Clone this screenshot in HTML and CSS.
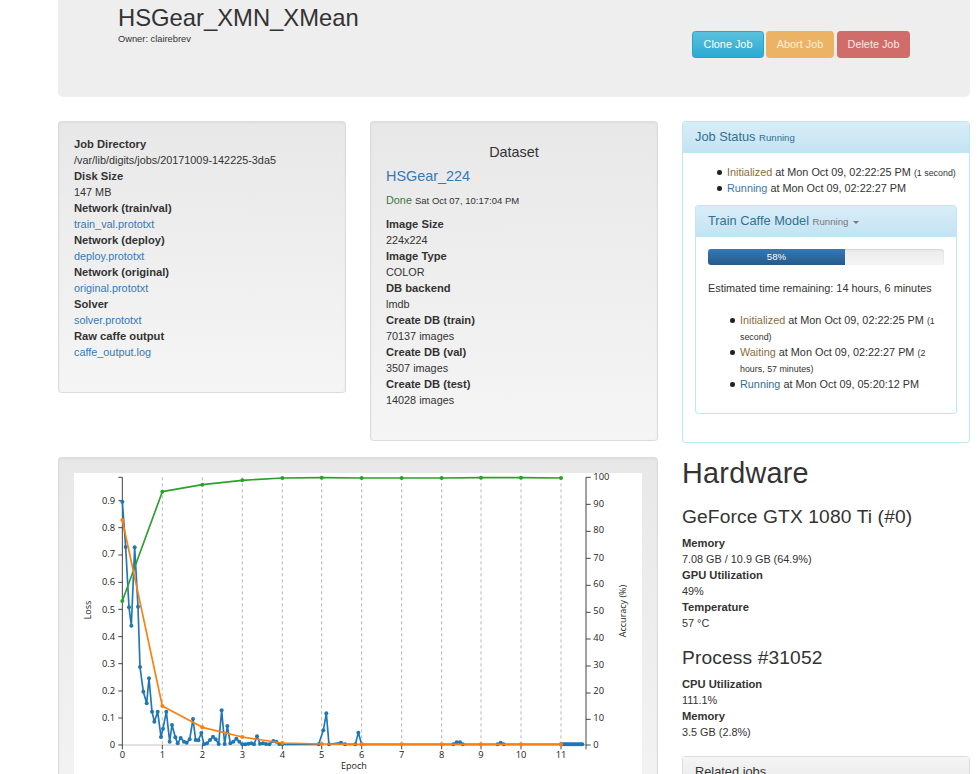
FILE: index.html
```html
<!DOCTYPE html>
<html lang="en">
<head>
<meta charset="utf-8">
<title>HSGear_XMN_XMean</title>
<link rel="stylesheet" href="styles.css">
</head>
<body>
<div class="page">
  <header class="jumbotron">
    <div class="job-title">
      <h1>HSGear_XMN_XMean</h1>
      <p class="owner">Owner: clairebrev</p>
    </div>
    <div class="actions">
      <a class="btn btn-info">Clone Job</a>
      <a class="btn btn-warning">Abort Job</a>
      <a class="btn btn-danger">Delete Job</a>
    </div>
  </header>
  <main class="content">
    <div class="left">
      <div class="cards">
        <section class="well card card-job">
          <dl>
            <dt>Job Directory</dt><dd>/var/lib/digits/jobs/20171009-142225-3da5</dd>
            <dt>Disk Size</dt><dd>147 MB</dd>
            <dt>Network (train/val)</dt><dd><a>train_val.prototxt</a></dd>
            <dt>Network (deploy)</dt><dd><a>deploy.prototxt</a></dd>
            <dt>Network (original)</dt><dd><a>original.prototxt</a></dd>
            <dt>Solver</dt><dd><a>solver.prototxt</a></dd>
            <dt>Raw caffe output</dt><dd><a>caffe_output.log</a></dd>
          </dl>
        </section>
        <section class="well card card-data">
          <h4 class="center">Dataset</h4>
          <h4><a>HSGear_224</a></h4>
          <p class="status"><span class="success">Done</span> <small>Sat Oct 07, 10:17:04 PM</small></p>
          <dl>
            <dt>Image Size</dt><dd>224x224</dd>
            <dt>Image Type</dt><dd>COLOR</dd>
            <dt>DB backend</dt><dd>lmdb</dd>
            <dt>Create DB (train)</dt><dd>70137 images</dd>
            <dt>Create DB (val)</dt><dd>3507 images</dd>
            <dt>Create DB (test)</dt><dd>14028 images</dd>
          </dl>
        </section>
      </div>
      <section class="well chart-well">
        <svg class="chart" viewBox="42 39 1704 960" width="568" height="320" role="img" aria-label="Loss and accuracy by epoch">
          <defs>
            <marker id="dot-b" viewBox="-7 -7 14 14" markerWidth="14" markerHeight="14" markerUnits="userSpaceOnUse"><circle r="6" fill="#1f77b4"/></marker>
            <marker id="dot-g" viewBox="-7 -7 14 14" markerWidth="14" markerHeight="14" markerUnits="userSpaceOnUse"><circle r="6" fill="#2ca02c"/></marker>
            <marker id="dot-o" viewBox="-7 -7 14 14" markerWidth="14" markerHeight="14" markerUnits="userSpaceOnUse"><circle r="6" fill="#ff7f0e"/></marker>
          </defs>
          <g class="grid">
            <path d="M307 52V855M427 52V855M547 52V855M667 52V855M785 52V855M905 52V855M1025 52V855M1145 52V855M1263 52V855M1383 52V855M1503 52V855"/>
          </g>
          <path class="x-axis" d="M187 855H1578"/>
          <path class="axis" d="M175 52H187V868M175 122H187M175 203H187M175 285H187M175 367H187M175 448H187M175 530H187M175 611H187M175 693H187M175 774H187M175 855H187"/>
          <path class="axis" d="M1592 52H1578V868M1578 133H1592M1578 214H1592M1578 295H1592M1578 376H1592M1578 457H1592M1578 537H1592M1578 618H1592M1578 699H1592M1578 778H1592M1578 855H1592"/>
          <path class="axis" d="M307 855V868M427 855V868M547 855V868M667 855V868M785 855V868M905 855V868M1025 855V868M1145 855V868M1263 855V868M1383 855V868M1503 855V868"/>
          <polyline class="series blue" marker-start="url(#dot-b)" marker-mid="url(#dot-b)" marker-end="url(#dot-b)" points="187,125 197,261 207,442 214,497 224,262 234,440 240,621 250,695 260,730 267,655 276,755 283,785 293,755 303,831 309,806 319,755 329,845 336,795 346,832 353,850 362,834 372,845 380,848 389,838 399,777 407,840 415,841 424,819 432,853 441,850 450,840 459,830 467,838 476,852 485,751 494,852 502,798 511,850 520,845 529,836 538,845 547,853 556,853 565,851 574,850 582,853 591,829 600,851 609,850 618,852 628,853 640,843 649,845 658,852 667,853 776,853 790,811 799,760 807,853 843,848 855,853 886,853 895,818 905,853 1180,853 1190,847 1200,847 1208,853 1313,853 1322,848 1331,853 1503,853 1508,853 1513,853 1518,853 1523,853 1528,853 1533,853 1538,853 1543,853 1548,853 1553,853 1558,853 1563,853 1567,853"/>
          <polyline class="series green" marker-start="url(#dot-g)" marker-mid="url(#dot-g)" marker-end="url(#dot-g)" points="187,423 307,95 427,74 547,61 667,54 785,53 905,54 1025,54 1145,54 1263,53 1383,53 1503,54"/>
          <polyline class="series orange" marker-start="url(#dot-o)" marker-mid="url(#dot-o)" marker-end="url(#dot-o)" points="187,180 307,738 427,802 547,831 667,849 785,852 905,853 1025,853 1145,853 1263,853 1383,853 1503,853"/>
          <g class="tick end">
            <text x="165" y="132">0.9</text><text x="165" y="212">0.8</text><text x="165" y="292">0.7</text><text x="165" y="376">0.6</text><text x="165" y="458">0.5</text><text x="165" y="539">0.4</text><text x="165" y="621">0.3</text><text x="165" y="703">0.2</text><text x="165" y="784">0.1</text><text x="165" y="865">0</text>
          </g>
          <g class="tick">
            <text x="1600" y="60">100</text><text x="1600" y="141">90</text><text x="1600" y="219">80</text><text x="1600" y="303">70</text><text x="1600" y="381">60</text><text x="1600" y="462">50</text><text x="1600" y="543">40</text><text x="1600" y="624">30</text><text x="1600" y="702">20</text><text x="1600" y="783">10</text><text x="1600" y="864">0</text>
          </g>
          <g class="tick middle">
            <text x="187" y="894">0</text><text x="307" y="894">1</text><text x="427" y="894">2</text><text x="547" y="894">3</text><text x="667" y="894">4</text><text x="785" y="894">5</text><text x="905" y="894">6</text><text x="1025" y="894">7</text><text x="1145" y="894">8</text><text x="1263" y="894">9</text><text x="1383" y="894">10</text><text x="1503" y="894">11</text>
          </g>
          <text class="label" x="882" y="927">Epoch</text>
          <text class="label" transform="translate(93 450) rotate(-90)">Loss</text>
          <text class="label" transform="translate(1698 453) rotate(-90)">Accuracy (%)</text>
        </svg>
      </section>
    </div>
    <aside class="right">
      <section class="panel panel-info">
        <div class="panel-heading"><h3>Job Status <small>Running</small></h3></div>
        <div class="panel-body">
          <ul>
            <li><span class="warning">Initialized</span> at Mon Oct 09, 02:22:25 PM <small>(1 second)</small></li>
            <li><span class="primary">Running</span> at Mon Oct 09, 02:22:27 PM</li>
          </ul>
          <section class="panel panel-info inner">
            <div class="panel-heading"><h3>Train Caffe Model <small class="muted">Running <span class="caret"></span></small></h3></div>
            <div class="panel-body">
              <div class="progress"><div class="bar">58%</div></div>
              <p class="eta">Estimated time remaining: 14 hours, 6 minutes</p>
              <ul>
                <li><span class="warning">Initialized</span> at Mon Oct 09, 02:22:25 PM <small>(1 second)</small></li>
                <li><span class="warning">Waiting</span> at Mon Oct 09, 02:22:27 PM <small>(2 hours, 57 minutes)</small></li>
                <li><span class="info">Running</span> at Mon Oct 09, 05:20:12 PM</li>
              </ul>
            </div>
          </section>
        </div>
      </section>
      <h1 class="hw-title">Hardware</h1>
      <h3 class="hw-sub">GeForce GTX 1080 Ti (#0)</h3>
      <dl>
        <dt>Memory</dt><dd>7.08 GB / 10.9 GB (64.9%)</dd>
        <dt>GPU Utilization</dt><dd>49%</dd>
        <dt>Temperature</dt><dd>57 °C</dd>
      </dl>
      <h3 class="hw-sub">Process #31052</h3>
      <dl>
        <dt>CPU Utilization</dt><dd>111.1%</dd>
        <dt>Memory</dt><dd>3.5 GB (2.8%)</dd>
      </dl>
      <section class="panel panel-default">
        <div class="panel-heading"><h3>Related jobs</h3></div>
      </section>
    </aside>
  </main>
</div>
</body>
</html>
```

FILE: styles.css
```css
* { box-sizing: border-box; }
html, body { margin: 0; height: 774px; overflow: hidden; background: #fff; }
body {
  font-family: "Liberation Sans", Arial, sans-serif;
  font-size: 10.85px;
  line-height: 16px;
  color: #333;
}
a { color: #337ab7; text-decoration: none; }
small { font-size: 9.52px; line-height: 0; }
h1, h3, h4, p, dl, dd, ul { margin: 0; font-weight: 500; }
p, dd, li { font-weight: 400; }
dt { font-weight: 700; font-size: 11.2px; }

.page { width: 912px; height: 774px; margin-left: 58px; overflow: hidden; }

.jumbotron {
  display: flex;
  justify-content: space-between;
  align-items: flex-start;
  height: 97px;
  margin-bottom: 24px;
  padding: 2px 60px 0;
  background: #eee;
  border-radius: 0 0 4.8px 4.8px;
}
.job-title h1 { font-size: 23.8px; line-height: 31px; font-weight: 400; }
.owner { font-size: 9.3px; line-height: 13px; }
.actions { display: flex; gap: 2px; margin-top: 29px; }
.btn {
  display: block;
  padding: 4.2px 0 4.8px;
  border: 1px solid transparent;
  border-radius: 3.2px;
  color: #fff;
  line-height: 16px;
  text-align: center;
}
.btn-info { width: 72px; background: linear-gradient(#5bc0de, #2aabd2); border-color: #28a4c9; }
.btn-warning { width: 68px; background: #ecb365; border-color: #ecb365; color: #fbeedd; }
.btn-danger { width: 73px; background: #d06d6a; border-color: #d06d6a; color: #f9e9e8; margin-left: 1px; }

.content { display: grid; grid-template-columns: 600px 288px; column-gap: 24px; }
.cards { display: flex; gap: 24px; align-items: flex-start; }

.well {
  background: linear-gradient(#e8e8e8, #f5f5f5);
  border: 1px solid #dcdcdc;
  border-radius: 3.2px;
  padding: 15px;
  box-shadow: inset 0 1px 3px rgba(0, 0, 0, .05), 0 1px 0 rgba(255, 255, 255, .1);
}
.card { width: 288px; }
.card dl { margin-bottom: 17px; }
.card-job { padding-top: 14px; }
.card h4 { font-size: 14.4px; line-height: 15.84px; font-weight: 400; margin: 8px 0; }
.card-data h4 + h4 { margin-bottom: 7px; }
.center { text-align: center; }
.status { margin-bottom: 8px; }
.success { color: #3c763d; }

.chart-well { margin-top: 16.5px; height: 400px; }
.chart { display: block; background: #fff; }
.grid path { fill: none; stroke: #b5b5b5; stroke-width: 3; stroke-dasharray: 9 9; }
.axis { fill: none; stroke: #444; stroke-width: 3; }
.x-axis { fill: none; stroke: #c4c4c4; stroke-width: 3; }
.series { fill: none; stroke-width: 5; stroke-linejoin: round; }
.blue { stroke: #1f77b4; }
.green { stroke: #2ca02c; }
.orange { stroke: #ff7f0e; }
.tick text { font-family: "Open Sans", sans-serif; font-size: 28px; fill: #222; }
.end text { text-anchor: end; }
.middle text { text-anchor: middle; }
.label { font-family: "Open Sans", sans-serif; font-size: 27px; fill: #222; text-anchor: middle; }

.panel { border: 1px solid #ddd; border-radius: 3.2px; background: #fff; }
.panel-info { border-color: #bce8f1; }
.panel-default { border-color: #ddd; }
.panel-heading { padding: 8px 12px; border-bottom: 1px solid #bce8f1; }
.panel-info > .panel-heading {
  color: #31708f;
  background: linear-gradient(#d9edf7, #c4e3f3);
}
.panel-default > .panel-heading { background: linear-gradient(#f5f5f5, #e8e8e8); border-color: #ddd; }
.panel-heading h3 { font-size: 12.8px; line-height: 14.08px; font-weight: 400; }
.panel-heading small { font-size: 9.6px; }
.panel-body { padding: 11px 12px 12px; }
.panel-body ul { padding-left: 32px; margin-bottom: 9px; list-style: none; }
.panel-body li { position: relative; }
.panel-body li small { font-size: 8.9px; }
.panel-body li::before {
  content: "";
  position: absolute;
  left: -10px;
  top: 6px;
  width: 4.5px;
  height: 4.5px;
  border-radius: 50%;
  background: #222;
}
.inner { margin-bottom: 16px; }
.inner .panel-body { padding: 12px 12px 13px; }
.inner .panel-body ul { margin-bottom: 8px; }
.muted { color: #777; }
.caret {
  display: inline-block;
  width: 0;
  height: 0;
  margin-left: 2px;
  vertical-align: middle;
  border-top: 3.2px solid;
  border-left: 3.2px solid transparent;
  border-right: 3.2px solid transparent;
}
.warning { color: #8a6d3b; }
.primary { color: #337ab7; }
.info { color: #31708f; }
.progress {
  height: 16px;
  margin-bottom: 15px;
  border-radius: 3.2px;
  background: linear-gradient(#ebebeb, #f5f5f5);
  box-shadow: inset 0 1px 2px rgba(0, 0, 0, .1);
  overflow: hidden;
}
.bar {
  width: 58%;
  height: 16px;
  background: linear-gradient(#337ab7, #265a88);
  color: #fff;
  font-size: 9.6px;
  line-height: 16px;
  text-align: center;
}
.eta { margin-bottom: 16px; }

.hw-title { font-size: 28.8px; line-height: 31.68px; font-weight: 400; margin-top: 15px; letter-spacing: .25px; }
.hw-sub { font-size: 19.2px; line-height: 21.12px; font-weight: 400; margin: 16px 0 8px; letter-spacing: .13px; }
.right dl { margin-bottom: 16px; }
.right > dl + .hw-sub { margin-top: 0; }
```
